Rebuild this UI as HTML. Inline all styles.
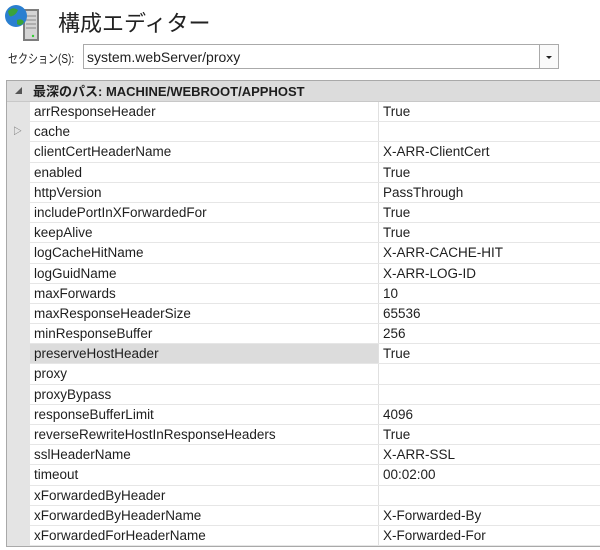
<!DOCTYPE html>
<html><head><meta charset="utf-8"><style>
body{margin:0;width:600px;height:550px;background:#fff;font-family:"Liberation Sans","Noto Sans CJK JP",sans-serif;position:relative;overflow:hidden;color:#1e1e1e}
.title{position:absolute;left:58px;top:6px;font-size:22px;color:#222}
.lbl{position:absolute;left:8px;top:48px;font-size:12.5px;transform:scaleX(0.8);transform-origin:left top;white-space:nowrap}
.combo{position:absolute;left:83px;top:44px;width:476px;height:25px;border:1px solid #aaa;box-sizing:border-box;background:#fff;font-size:14px;padding:4px 3px}
.btn{position:absolute;right:0;top:0;width:18px;height:23px;border-left:1px solid #aaa;background:#fafafa}
.btn:after{content:"";position:absolute;left:6px;top:11px;border:3px solid transparent;border-top:3px solid #222}
.grid{position:absolute;left:6px;top:80px;width:600px;height:467px;border:1px solid #a9a9a9;border-right:none;box-sizing:border-box;background:#e4e4e4}
.hdr{height:20px;background:#dcdcdc;font-weight:bold;font-size:13px;line-height:21px;padding-left:26px;border-bottom:1px solid #c8c8c8;position:relative}
.hdr:before{content:"◢";position:absolute;left:8px;top:0;font-size:7px;color:#555}
.row{height:20.2px;box-sizing:border-box;margin-left:23px;background:#fff;border-bottom:1px solid #e6e6e6;display:flex;font-size:13.5px;line-height:19px;position:relative}
.row .k{width:349px;border-right:1px solid #e0e0e0;padding-left:4px;box-sizing:border-box}
.row .v{padding-left:4px}
.sel .k{background:#dcdcdc}
.exp:before{content:"▷";position:absolute;left:-17px;top:0;font-size:9px;color:#666}
</style></head><body>
<svg style="position:absolute;left:3px;top:3px" width="40" height="40" viewBox="0 0 40 40">
<rect x="20" y="6" width="16" height="32" fill="#7d7d7d"/><rect x="22" y="8" width="12" height="28" fill="#d4d4d4"/>
<line x1="23" y1="13" x2="33" y2="13" stroke="#888"/><line x1="23" y1="17" x2="33" y2="17" stroke="#888"/><line x1="23" y1="21" x2="33" y2="21" stroke="#888"/><line x1="23" y1="25" x2="33" y2="25" stroke="#888"/>
<circle cx="30" cy="33" r="1.2" fill="#3c3"/>
<circle cx="13" cy="13" r="11" fill="#2a7fd0"/><path d="M5 8 q5 -5 10 -1 q-2 5 -6 6 q-3 2 -4 -5z M14 17 q5 -2 7 2 q-3 5 -7 2z" fill="#3aa33a"/>
</svg>
<div class="title">構成エディター</div>
<div class="lbl">セクション(S):</div>
<div class="combo">system.webServer/proxy<div class="btn"></div></div>
<div class="grid">
<div class="hdr">最深のパス: MACHINE/WEBROOT/APPHOST</div>
<div class="row"><div class="k">arrResponseHeader</div><div class="v">True</div></div>
<div class="row exp"><div class="k">cache</div><div class="v"></div></div>
<div class="row"><div class="k">clientCertHeaderName</div><div class="v">X-ARR-ClientCert</div></div>
<div class="row"><div class="k">enabled</div><div class="v">True</div></div>
<div class="row"><div class="k">httpVersion</div><div class="v">PassThrough</div></div>
<div class="row"><div class="k">includePortInXForwardedFor</div><div class="v">True</div></div>
<div class="row"><div class="k">keepAlive</div><div class="v">True</div></div>
<div class="row"><div class="k">logCacheHitName</div><div class="v">X-ARR-CACHE-HIT</div></div>
<div class="row"><div class="k">logGuidName</div><div class="v">X-ARR-LOG-ID</div></div>
<div class="row"><div class="k">maxForwards</div><div class="v">10</div></div>
<div class="row"><div class="k">maxResponseHeaderSize</div><div class="v">65536</div></div>
<div class="row"><div class="k">minResponseBuffer</div><div class="v">256</div></div>
<div class="row sel"><div class="k">preserveHostHeader</div><div class="v">True</div></div>
<div class="row"><div class="k">proxy</div><div class="v"></div></div>
<div class="row"><div class="k">proxyBypass</div><div class="v"></div></div>
<div class="row"><div class="k">responseBufferLimit</div><div class="v">4096</div></div>
<div class="row"><div class="k">reverseRewriteHostInResponseHeaders</div><div class="v">True</div></div>
<div class="row"><div class="k">sslHeaderName</div><div class="v">X-ARR-SSL</div></div>
<div class="row"><div class="k">timeout</div><div class="v">00:02:00</div></div>
<div class="row"><div class="k">xForwardedByHeader</div><div class="v"></div></div>
<div class="row"><div class="k">xForwardedByHeaderName</div><div class="v">X-Forwarded-By</div></div>
<div class="row"><div class="k">xForwardedForHeaderName</div><div class="v">X-Forwarded-For</div></div>
</div>
</body></html>
